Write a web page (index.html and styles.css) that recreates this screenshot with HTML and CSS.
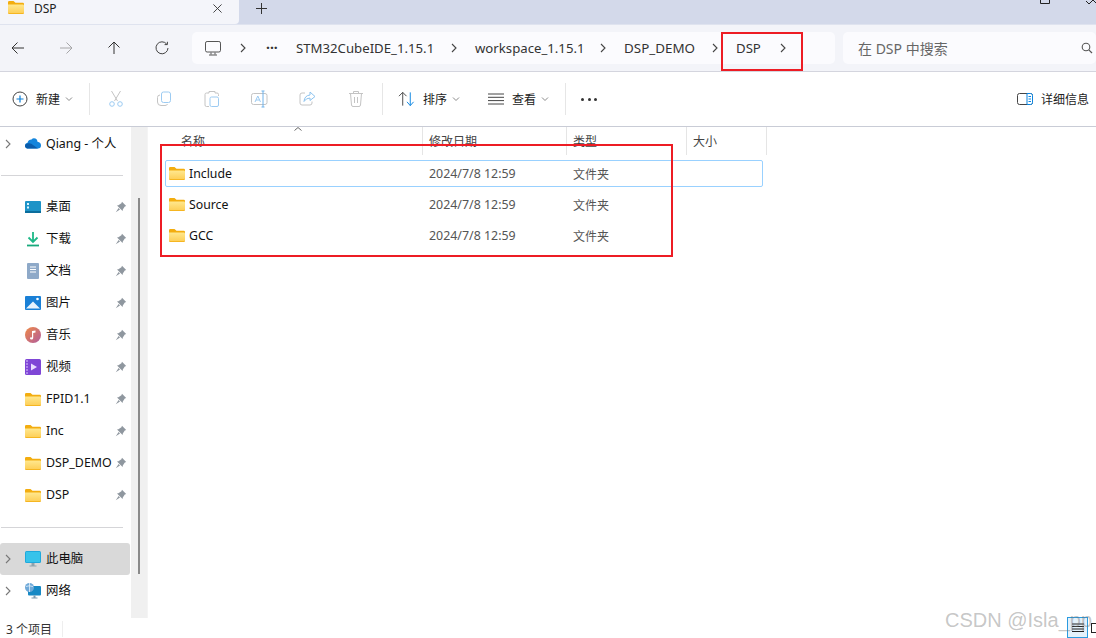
FILE: index.html
```html
<!DOCTYPE html>
<html lang="zh">
<head>
<meta charset="utf-8">
<title>DSP</title>
<link rel="stylesheet" href="styles.css">
</head>
<body>
<svg class="defs" width="0" height="0" aria-hidden="true">
  <defs>
    <linearGradient id="fg" x1="0" y1="0" x2="0" y2="1"><stop offset="0" stop-color="#ffe88f"/><stop offset="1" stop-color="#fdcf58"/></linearGradient>
    <symbol id="folder" viewBox="0 0 16 13">
      <path d="M0 1.2Q0 0 1.2 0H5.5L7.5 1.8H14.8Q16 1.8 16 3V11.8Q16 13 14.8 13H1.2Q0 13 0 11.8Z" fill="#f3ad0f"/>
      <path d="M0 3.4H14.8Q16 3.4 16 4.6V11.2Q16 12.2 14.8 12.2H1.2Q0 12.2 0 11.2Z" fill="url(#fg)"/>
    </symbol>
    <symbol id="pin" viewBox="0 0 12 12">
      <path d="M7 .8 11.2 5 9.8 5.6 7.8 8.6 7.6 10 2 4.4 3.4 4.2 6.4 2.2ZM3.6 7 .8 11.2 5 8.4Z" fill="#8f979f"/>
    </symbol>
    <symbol id="chev" viewBox="0 0 10 10"><path d="M3 1 7 5 3 9" fill="none" stroke="currentColor" stroke-width="1.1"/></symbol>
    <symbol id="down" viewBox="0 0 8 8"><path d="M1 2.5 4 5.5 7 2.5" fill="none" stroke="#8a8a8a" stroke-width="1"/></symbol>
  </defs>
</svg>

<div class="app">
  <header class="tabbar">
    <div class="tab">
      <svg class="tab-folder"><use href="#folder"/></svg>
      <span class="tab-title">DSP</span>
      <svg class="tab-x" viewBox="0 0 10 10"><path d="M.5.5 9.5 9.5M9.5.5.5 9.5" stroke="#333" fill="none"/></svg>
    </div>
    <svg class="tab-plus" viewBox="0 0 11 11"><path d="M5.5 0V11M0 5.5H11" stroke="#333" fill="none"/></svg>
    <div class="win-btns">
      <svg class="win-max" viewBox="0 0 10 4"><path d="M.5 0V3.500H9.500V0" stroke="#222" fill="none"/></svg>
      <svg class="win-close" viewBox="0 0 10 4"><path d="M3 4 7 0 11 4M-1 0 3 4" stroke="#222" fill="none"/></svg>
    </div>
  </header>

  <nav class="navbar">
    <div class="nav-btns">
      <svg class="nav-ic" viewBox="0 0 14 14"><path d="M13 7H1M6.5 1.5 1 7l5.5 5.5" fill="none" stroke="#333" stroke-width="1"/></svg>
      <svg class="nav-ic" viewBox="0 0 14 14"><path d="M1 7H13M7.5 1.5 13 7l-5.5 5.5" fill="none" stroke="#a6a6a8" stroke-width="1"/></svg>
      <svg class="nav-ic" viewBox="0 0 14 14"><path d="M7 13V1M1.5 6.5 7 1l5.5 5.5" fill="none" stroke="#333" stroke-width="1"/></svg>
      <svg class="nav-ic" viewBox="0 0 14 14"><path d="M11.8 3.2A6 6 0 1 0 13 7M12.4 .8V3.6H9.6" fill="none" stroke="#444" stroke-width="1"/></svg>
    </div>
    <div class="address">
      <svg class="pc-ic" viewBox="0 0 16 15"><rect x=".5" y=".5" width="15" height="10.5" rx="1.6" fill="none" stroke="#555"/><path d="M6 11.5V13.5M10 11.5V13.5M4 14H12" stroke="#555" fill="none"/></svg>
      <svg class="crumb-chev c1"><use href="#chev"/></svg>
      <span class="dots">···</span>
      <span class="crumb c-ide">STM32CubeIDE_1.15.1</span>
      <svg class="crumb-chev"><use href="#chev"/></svg>
      <span class="crumb c-ws">workspace_1.15.1</span>
      <svg class="crumb-chev"><use href="#chev"/></svg>
      <span class="crumb c-demo">DSP_DEMO</span>
      <svg class="crumb-chev"><use href="#chev"/></svg>
      <span class="crumb c-dsp">DSP</span>
      <svg class="crumb-chev"><use href="#chev"/></svg>
    </div>
    <div class="search">
      <span class="search-text">在 DSP 中搜索</span>
      <svg class="search-ic" viewBox="0 0 12 12"><circle cx="5" cy="5" r="3.8" fill="none" stroke="#555" stroke-width="1.1"/><path d="M7.8 7.8 11 11" stroke="#555" stroke-width="1.2"/></svg>
    </div>
  </nav>

  <div class="toolbar">
    <div class="tool new">
      <svg class="tool-ic16" viewBox="0 0 16 16"><circle cx="8" cy="8" r="7" fill="none" stroke="#444"/><path d="M8 4.5V11.5M4.5 8H11.5" stroke="#0a7fd8" stroke-width="1.2"/></svg>
      <span class="tool-label">新建</span>
      <svg class="caret"><use href="#down"/></svg>
    </div>
    <div class="sep s1"></div>
    <div class="ghosts">
      <svg class="ghost" viewBox="0 0 16 18"><path d="M3.5 1 9.5 11M12.5 1 6.5 11" stroke="#c4c4c4" fill="none"/><circle cx="4" cy="14" r="2.3" fill="none" stroke="#9ccbf2"/><circle cx="12" cy="14" r="2.3" fill="none" stroke="#9ccbf2"/></svg>
      <svg class="ghost" viewBox="0 0 16 18"><rect x="5.5" y="2" width="9" height="10.5" rx="2" fill="none" stroke="#9ccbf2"/><path d="M4 5Q1.5 5 1.5 7.5V12Q1.5 15.5 5 15.5H9Q11 15.5 11.5 14" fill="none" stroke="#c4c4c4"/></svg>
      <svg class="ghost" viewBox="0 0 16 18"><path d="M5 3H2.5Q1 3 1 4.5V15Q1 16.5 2.500 16.500H5M5 3V1.500H11V3M11 3H13Q14.500 3 14.500 4.500V6" fill="none" stroke="#c4c4c4"/><rect x="6" y="7" width="8.500" height="9.500" rx="1.500" fill="none" stroke="#9ccbf2"/></svg>
      <svg class="ghost" viewBox="0 0 18 18"><rect x=".5" y="3.500" width="15.500" height="11" rx="2" fill="none" stroke="#c4c4c4"/><path d="M4 12 6.800 6 9.500 12M5 10H8.600" fill="none" stroke="#9ccbf2"/><path d="M12 1V17M10.500 1H13.500M10.500 17H13.500" fill="none" stroke="#6fb2ea"/></svg>
      <svg class="ghost" viewBox="0 0 18 18"><path d="M6 3H3Q1 3 1 5V13Q1 15 3 15H11Q13 15 13 13V11.500" fill="none" stroke="#c4c4c4"/><path d="M11 2 16 6.500 11 10.500V8Q7 8 5 11.500 5.500 5.500 11 5Z" fill="none" stroke="#8cc3ef"/></svg>
      <svg class="ghost" viewBox="0 0 16 18"><path d="M1 3.500H15M5.500 3.500V1.500H10.500V3.500M2.500 3.500 3.500 15Q3.700 16.500 5 16.500H11Q12.300 16.500 12.500 15L13.500 3.500M6.500 7V13M9.500 7V13" fill="none" stroke="#c4c4c4"/></svg>
    </div>
    <div class="sep s2"></div>
    <div class="tool sort">
      <svg class="tool-ic16" viewBox="0 0 18 16"><path d="M5 15V1M1 5 5 1 9 5" fill="none" stroke="#444"/><path d="M13 1V15M9.500 11 13 15 16.500 11" fill="none" stroke="#0a84e0"/></svg>
      <span class="tool-label">排序</span>
      <svg class="caret"><use href="#down"/></svg>
    </div>
    <div class="tool view">
      <svg class="tool-ic16" viewBox="0 0 16 12"><path d="M0 1H16M0 4.300H16M0 7.600H16M0 11H16" stroke="#444" fill="none"/></svg>
      <span class="tool-label">查看</span>
      <svg class="caret"><use href="#down"/></svg>
    </div>
    <div class="sep s3"></div>
    <div class="more"><i></i><i></i><i></i></div>
    <div class="details">
      <svg class="details-ic" viewBox="0 0 16 12"><rect x=".5" y=".5" width="15" height="11" rx="2" fill="none" stroke="#444"/><path d="M10 .5H13.500Q15.500 .5 15.500 2.500V9.500Q15.500 11.500 13.500 11.500H10Z" fill="#fff" stroke="#0a84e0"/><path d="M11.500 3.500H14M11.500 6H14M11.500 8.500H14" stroke="#0a84e0"/></svg>
      <span class="tool-label">详细信息</span>
    </div>
  </div>

  <main class="main">
    <aside class="sidebar">
      <div class="side-list">
        <div class="side-row r-top">
          <svg class="side-chev"><use href="#chev"/></svg>
          <svg class="side-ic ic-cloud" viewBox="0 0 16 11"><path d="M3.500 11Q0 11 0 8.200 0 5.800 2.500 5.300 3.500 2 6.500 2 8 0 10.500 1 12.500 2 12.500 4.200 16 4.600 16 8 16 11 13 11Z" fill="#1485dc"/><path d="M3.500 11Q0 11 0 8.200 0 6.500 2 6 6 5 8 7.500L13 11Z" fill="#0a5cab"/></svg>
          <span class="side-name">Qiang - 个人</span>
        </div>
        <div class="side-sep sep-a"></div>
        <div class="side-row">
          <svg class="side-ic" viewBox="0 0 16 12"><rect width="16" height="12" rx="1" fill="#1d93c7"/><rect width="16" height="2" y="10" fill="#0b6d9c"/><path d="M2 2H4V4H2ZM2 5.500H4V7.500H2Z" fill="#d9f4ff"/></svg>
          <span class="side-name">桌面</span><svg class="pin"><use href="#pin"/></svg>
        </div>
        <div class="side-row">
          <svg class="side-ic" viewBox="0 0 16 16"><path d="M8 1V10M3.500 6.500 8 11 12.500 6.500" fill="none" stroke="#1db887" stroke-width="1.800"/><path d="M2 14.500H14" stroke="#18a97c" stroke-width="1.800"/></svg>
          <span class="side-name">下载</span><svg class="pin"><use href="#pin"/></svg>
        </div>
        <div class="side-row">
          <svg class="side-ic" viewBox="0 0 16 16"><rect x="2" width="12" height="16" rx="1" fill="#8ea9c8"/><path d="M5 4H11M5 6.500H11M5 9H11" stroke="#fff"/></svg>
          <span class="side-name">文档</span><svg class="pin"><use href="#pin"/></svg>
        </div>
        <div class="side-row">
          <svg class="side-ic" viewBox="0 0 16 16"><rect y="1" width="16" height="14" rx="1" fill="#1a80d6"/><path d="M1 13.500 8 6.500 15 13.500Z" fill="#e7f3fd"/><circle cx="12.500" cy="4" r="1.300" fill="#fff"/></svg>
          <span class="side-name">图片</span><svg class="pin"><use href="#pin"/></svg>
        </div>
        <div class="side-row">
          <svg class="side-ic" viewBox="0 0 16 16"><defs><linearGradient id="mg" x1="0" y1="0" x2="1" y2="1"><stop offset="0" stop-color="#ef8a46"/><stop offset="1" stop-color="#b15c9e"/></linearGradient></defs><circle cx="8" cy="8" r="8" fill="url(#mg)"/><path d="M7 10.500V4L10.500 3.500V5.500L8.200 6V11Q8.200 12.500 6.500 12.500 5 12.500 5 11.200 5 10 7 10.500Z" fill="#fff"/></svg>
          <span class="side-name">音乐</span><svg class="pin"><use href="#pin"/></svg>
        </div>
        <div class="side-row">
          <svg class="side-ic" viewBox="0 0 16 16"><rect width="16" height="16" rx="1.500" fill="#7f46d6"/><path d="M6 4.500 12 8 6 11.500Z" fill="#e9dcff"/><path d="M1 2H3M1 5H3M1 8H3M1 11H3M1 14H3" stroke="#d9c4fb"/></svg>
          <span class="side-name">视频</span><svg class="pin"><use href="#pin"/></svg>
        </div>
        <div class="side-row">
          <svg class="side-ic ic-f"><use href="#folder"/></svg>
          <span class="side-name">FPID1.1</span><svg class="pin"><use href="#pin"/></svg>
        </div>
        <div class="side-row">
          <svg class="side-ic ic-f"><use href="#folder"/></svg>
          <span class="side-name">Inc</span><svg class="pin"><use href="#pin"/></svg>
        </div>
        <div class="side-row">
          <svg class="side-ic ic-f"><use href="#folder"/></svg>
          <span class="side-name">DSP_DEMO</span><svg class="pin"><use href="#pin"/></svg>
        </div>
        <div class="side-row">
          <svg class="side-ic ic-f"><use href="#folder"/></svg>
          <span class="side-name">DSP</span><svg class="pin"><use href="#pin"/></svg>
        </div>
        <div class="side-sep sep-b"></div>
        <div class="side-row selected">
          <svg class="side-chev"><use href="#chev"/></svg>
          <svg class="side-ic" viewBox="0 0 16 16"><rect width="16" height="12" rx="1.500" fill="#1fa9dc"/><rect x="1" y="1" width="14" height="10" fill="#37c3ea"/><path d="M6.500 12H9.500V14.500H6.500ZM4.500 14.500H11.500V15.500H4.500Z" fill="#8fa3ad"/></svg>
          <span class="side-name">此电脑</span>
        </div>
        <div class="side-row">
          <svg class="side-chev"><use href="#chev"/></svg>
          <svg class="side-ic" viewBox="0 0 16 16"><rect x="3" y="3" width="13" height="9.500" rx="1" fill="#1789c5"/><path d="M8.500 12.500H10.500V14.500H8.500ZM6.500 14.500H12.500V15.500H6.500Z" fill="#7f9bb0"/><circle cx="4.500" cy="4.500" r="4.500" fill="#6fa9d8"/><path d="M1 3.500Q4 2 8 3.500M4.500 0V9" stroke="#e4f1fb" fill="none" stroke-width=".8"/></svg>
          <span class="side-name">网络</span>
        </div>
      </div>
      <div class="track"><div class="thumb"></div></div>
    </aside>

    <section class="files">
      <div class="sort-arrow"><svg viewBox="0 0 8 4" class="sort-svg"><path d="M.5 3.500 4 .5 7.500 3.500" fill="none" stroke="#666"/></svg></div>
      <div class="cols">
        <div class="col col-name">名称</div>
        <div class="col col-date">修改日期</div>
        <div class="col col-type">类型</div>
        <div class="col col-size">大小</div>
      </div>
      <div class="rows">
        <div class="row active">
          <div class="cell-name"><svg class="ic-folder"><use href="#folder"/></svg><span>Include</span></div>
          <div class="cell-date">2024/7/8 12:59</div>
          <div class="cell-type">文件夹</div>
        </div>
        <div class="row">
          <div class="cell-name"><svg class="ic-folder"><use href="#folder"/></svg><span>Source</span></div>
          <div class="cell-date">2024/7/8 12:59</div>
          <div class="cell-type">文件夹</div>
        </div>
        <div class="row">
          <div class="cell-name"><svg class="ic-folder"><use href="#folder"/></svg><span>GCC</span></div>
          <div class="cell-date">2024/7/8 12:59</div>
          <div class="cell-type">文件夹</div>
        </div>
      </div>
    </section>
  </main>

  <footer class="status"><span class="status-text">3 个项目</span><div class="status-sep"></div></footer>
</div>

<div class="mark mark-path"></div>
<div class="mark mark-files"></div>
<div class="view-switch">
  <div class="vs-list"><svg viewBox="0 0 12 10" class="vs-svg"><path d="M0 1H12M0 3.500H12M0 6H12M0 8.500H12" stroke="#222" fill="none"/></svg></div>
  <div class="vs-grid"></div>
</div>
<div class="watermark">CSDN @Isla_pp</div>
</body>
</html>
```
FILE: styles.css
```css
* { box-sizing: border-box; }
html, body { margin: 0; padding: 0; height: 100%; overflow: hidden; background: #fff; }
body { font-family: "Noto Sans", "Noto Sans CJK SC", sans-serif; font-size: 12px; color: #1a1a1a; }
.defs { position: absolute; }
svg { display: block; flex: none; }

.app { display: flex; flex-direction: column; width: 1096px; height: 638px; }

.tabbar { height: 24px; background: #d3d9ea; display: flex; align-items: flex-start; position: relative; flex: none; }
.tab { width: 239px; height: 24px; background: #f4f5fa; border-bottom-right-radius: 4px; display: flex; align-items: center; padding-left: 8px; }
.tab-folder { width: 16px; height: 13px; margin-top: -9px; }
.tab-title { font-size: 12px; margin-left: 10px; margin-top: -8px; color: #222; width: 26px; }
.tab-x { width: 9px; height: 9px; margin-left: 153px; margin-top: -8px; }
.tab-plus { width: 11px; height: 11px; margin: 3px 0 0 17px; }
.win-btns { margin-left: auto; display: flex; gap: 36px; }
.win-max, .win-close { width: 10px; height: 4px; }

.navbar { height: 48px; flex: none; background: #f3f4f9; border-bottom: 1px solid #d4d5de; border-top: 1px solid #dfe3ef; display: flex; align-items: flex-start; padding: 7px 0 0 11px; }
.nav-btns { display: flex; gap: 34px; width: 181px; padding-top: 9px; }
.nav-ic { width: 14px; height: 14px; }
.address { width: 643px; height: 32px; background: #fbfbfe; border-radius: 5px; display: flex; align-items: center; padding-left: 13px; color: #333; }
.pc-ic { width: 16px; height: 15px; }
.crumb-chev { width: 10px; height: 10px; color: #444; }
.c1 { margin-left: 17px; }
.dots { font-size: 14px; font-weight: 700; width: 12px; margin-left: 18px; letter-spacing: 0; line-height: 10px; }
.crumb { font-size: 13.2px; white-space: nowrap; }
.c-ide { width: 144px; margin-left: 18px; }
.c-ws { width: 114px; margin-left: 16px; }
.c-demo { width: 77px; margin-left: 16px; font-size: 13.4px; }
.c-dsp { width: 33px; margin-left: 16px; }
.address > .crumb + .crumb-chev { margin-left: 9px; }
.search { width: 253px; height: 32px; margin-left: 8px; background: #fbfbfe; border-radius: 5px; display: flex; align-items: center; padding: 0 3px 0 15px; }
.search-text { font-size: 14px; color: #666; white-space: nowrap; }
.search-ic { width: 12px; height: 12px; margin-left: auto; }

.toolbar { height: 55px; flex: none; background: #fff; border-bottom: 1px solid #c9ccd6; display: flex; align-items: center; padding-left: 12px; }
.tool { display: flex; align-items: center; }
.tool-ic16 { width: 16px; height: 16px; }
.tool-label { font-size: 12px; color: #222; }
.new .tool-label { margin-left: 8px; }
.caret { width: 8px; height: 8px; margin-left: 5px; }
.sep { width: 1px; height: 32px; background: #e6e6e6; }
.s1 { margin-left: 16px; }
.ghosts { display: flex; gap: 30px; margin-left: 17px; align-items: center; }
.ghost { width: 18px; height: 18px; }
.s2 { margin-left: 17px; }
.sort { margin-left: 15px; }
.sort .tool-ic16 { width: 17px; }
.sort .tool-label { margin-left: 8px; }
.view { margin-left: 28px; }
.view .tool-ic16 { height: 12px; }
.view .tool-label { margin-left: 8px; }
.s3 { margin-left: 16px; }
.more { display: flex; gap: 3.500px; margin-left: 15px; }
.more i { display: block; width: 3px; height: 3px; border-radius: 50%; background: #333; }
.details { margin-left: auto; display: flex; align-items: center; padding-right: 7px; }
.details-ic { width: 16px; height: 12px; margin-right: 8px; }

.main { flex: 1; display: flex; min-height: 0; background: #fff; }
.sidebar { width: 148px; flex: none; display: flex; border-right: 1px solid #f4f4f4; }
.side-list { width: 131px; flex: none; }
.side-row { height: 32px; display: flex; align-items: center; padding-left: 25px; position: relative; }
.r-top { margin-top: 1px; }
.side-chev { width: 10px; height: 10px; color: #777; position: absolute; left: 3px; top: 11px; }
.side-ic { width: 16px; height: 16px; }
.ic-cloud { margin-top: -2px; }
.ic-f { height: 13px; }
.side-name { margin-left: 5px; padding-bottom: 2px; font-size: 12.4px; color: #111; white-space: nowrap; flex: 1; }
.pin { width: 12px; height: 12px; position: absolute; left: 115px; top: 10px; }
.side-sep { height: 1px; background: #d5d5d8; width: 122px; }
.sep-a { margin: 15px 0 15px 1px; }
.sep-b { margin: 16px 0 15px 1px; }
.selected { background: #d9d9d9; border-radius: 3px; width: 130px; }
.track { width: 16px; height: 100%; background: #f0f0f0; padding-left: 7px; padding-top: 71px; }
.thumb { width: 2px; height: 376px; background: #8a8a8a; }

.files { flex: 1; position: relative; min-width: 0; }
.sort-arrow { position: absolute; left: 146px; top: 0; }
.sort-svg { width: 8px; height: 4px; }
.cols { display: flex; height: 28px; }
.col { border-right: 1px solid #e5e5e5; font-size: 12px; color: #444; padding-top: 5px; }
.col-name { width: 275px; padding-left: 33px; }
.col-date { width: 144px; padding-left: 6px; }
.col-type { width: 120px; padding-left: 6px; }
.col-size { width: 80px; padding-left: 6px; }
.rows { margin: 5px 0 0 17px; width: 598px; }
.row { height: 31px; display: flex; align-items: center; border: 1px solid transparent; border-radius: 2px; padding-left: 3px; }
.row.active { height: 27px; margin-bottom: 2px; border-color: #99d1ff; }
.cell-name { width: 260px; display: flex; align-items: center; font-size: 12.3px; color: #111; }
.ic-folder { width: 16px; height: 13px; margin-right: 4px; }
.cell-date { width: 144px; color: #555; font-size: 12.4px; }
.cell-type { color: #555; font-size: 12px; }

.status { height: 20px; flex: none; display: flex; align-items: center; padding: 2px 0 0 6px; background: #fff; }
.status-text { font-size: 12px; color: #333; }
.status-sep { width: 1px; height: 16px; background: #eeeeee; margin-left: 10px; }

.mark { position: absolute; border: 2px solid #ed1c24; }
.mark-path { left: 721px; top: 32px; width: 82px; height: 39px; }
.mark-files { left: 160px; top: 144px; width: 513px; height: 113px; }
.watermark { position: absolute; left: 945px; top: 609px; font-family: "Liberation Sans", sans-serif; font-size: 20px; color: rgba(110,110,110,.4); white-space: nowrap; }
.view-switch { position: absolute; left: 1067px; top: 617px; display: flex; }
.vs-list { width: 21px; height: 21px; border: 1px solid #2b9be0; background: #e4f1fb; display: flex; align-items: center; justify-content: center; }
.vs-svg { width: 12px; height: 10px; }
.vs-grid { width: 8px; height: 10px; margin: 6px 0 0 3px; border: 1px solid #222; }
```
